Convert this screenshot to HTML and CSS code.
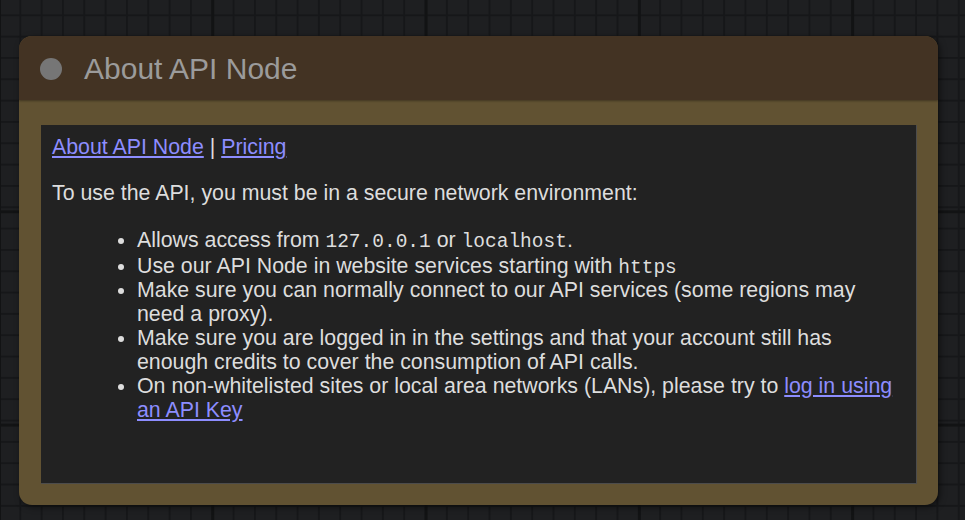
FILE: index.html
```html
<!DOCTYPE html>
<html lang="en">
<head>
    <meta charset="UTF-8">
    <meta name="viewport" content="width=device-width, initial-scale=1.0">
    <title>About API Node</title>
    <link rel="stylesheet" href="styles.css">
</head>
<body>
    <div class="canvas">
        <div class="node">
            <div class="node-title">
                <span class="node-dot"></span>
                <span class="node-name">About API Node</span>
            </div>
            <div class="node-body">
                <div class="markdown">
                    <p><a href="#">About API Node</a> | <a href="#">Pricing</a></p>
                    <p>To use the API, you must be in a secure network environment:</p>
                    <ul>
                        <li>Allows access from <code>127.0.0.1</code> or <code>localhost</code>.</li>
                        <li>Use our API Node in website services starting with <code>https</code></li>
                        <li>Make sure you can normally connect to our API services (some regions may need a proxy).</li>
                        <li>Make sure you are logged in in the settings and that your account still has enough credits to cover the consumption of API calls.</li>
                        <li>On non-whitelisted sites or local area networks (LANs), please try to <a href="#">log in using an API Key</a></li>
                    </ul>
                </div>
            </div>
        </div>
    </div>
</body>
</html>
```

FILE: styles.css
```css
html, body {
    margin: 0;
    padding: 0;
    height: 100%;
    overflow: hidden;
}

body {
    font-family: "Liberation Sans", Arial, sans-serif;
    background-color: #1e1f21;
    background-image:
        linear-gradient(to right, #121314 3px, transparent 3px),
        linear-gradient(to bottom, #121314 3px, transparent 3px),
        linear-gradient(to right, #161719 2px, transparent 2px),
        linear-gradient(to bottom, #161719 2px, transparent 2px);
    background-size: 213.3px 213.3px, 213.3px 213.3px, 21.33px 21.33px, 21.33px 21.33px;
    background-position: -2px -3px, -2px -3px, -2px -7px, -2px -7px;
}

.canvas {
    padding: 36px 0 0 19px;
}

.node {
    width: 919px;
    height: 469px;
    display: flex;
    flex-direction: column;
    border-radius: 13px;
    overflow: hidden;
    background-color: #615232;
    box-shadow: 2px 2px 6px rgba(0, 0, 0, 0.5);
}

.node-title {
    box-sizing: border-box;
    height: 64px;
    flex-shrink: 0;
    display: flex;
    align-items: center;
    padding: 2px 0 0 21px;
    background-color: #433323;
    box-shadow: 0 1px 2px rgba(0, 0, 0, 0.35);
    position: relative;
}

.node-dot {
    width: 22px;
    height: 22px;
    border-radius: 50%;
    background-color: #767676;
    margin-right: 22px;
}

.node-name {
    font-size: 30px;
    color: #9b9b9b;
}

.node-body {
    flex: 1;
    display: flex;
    padding: 25px 21px 21px 22px;
}

.markdown {
    flex: 1;
    background-color: #222;
    border-right: 1px solid #4c4c4c;
    border-bottom: 1px solid #4c4c4c;
    padding: 10px 11px;
    color: #ddd;
    font-size: 21.33px;
    line-height: 24px;
}

.markdown p {
    margin: 0 0 22px 0;
}

.markdown a {
    color: #8d8dff;
}

.markdown ul {
    margin: 0;
    padding: 1px 0 0 85px;
}

.markdown li:first-child {
    padding-bottom: 1px;
}

.markdown code {
    font-family: "Liberation Mono", "Courier New", monospace;
    font-size: 19.5px;
    line-height: 1;
    color: #ddd;
}
```
